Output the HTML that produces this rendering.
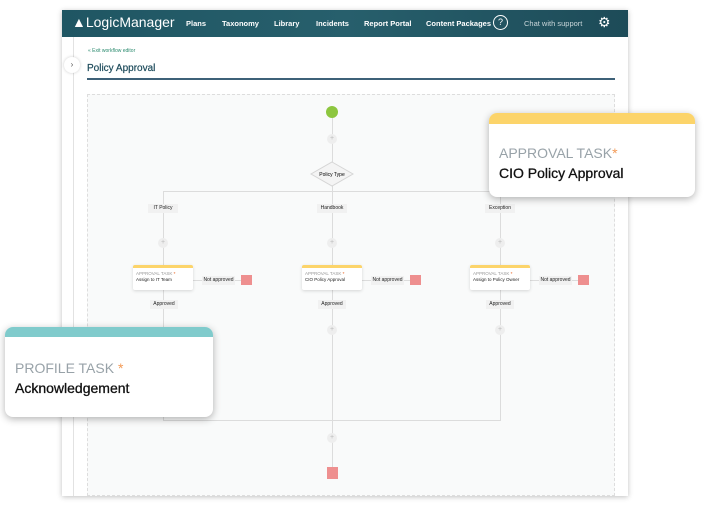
<!DOCTYPE html>
<html><head><meta charset="utf-8"><style>
*{box-sizing:border-box;margin:0;padding:0}
body{width:705px;height:505px;background:#fff;position:relative;overflow:hidden;font-family:"Liberation Sans",sans-serif}
.a{position:absolute}
.win{left:62px;top:10px;width:566px;height:486px;background:#fff;box-shadow:0 1px 5px rgba(0,0,0,.25)}
.hdr{left:62px;top:10px;width:566px;height:27px;background:linear-gradient(90deg,#1f5663,#275f6c 50%,#1d4b58)}
.nav{color:#fff;font-size:7.5px;font-weight:bold;top:19px;white-space:nowrap}
.vl{background:#dcdcdc;width:1px}
.hl{background:#dcdcdc;height:1px}
.plus{width:10px;height:10px;border-radius:50%;background:#eeeeee;color:#bbb;font-size:7px;line-height:10px;text-align:center}
.lbl{background:#f1f1f1;font-size:5px;color:#222;text-align:center;height:9px;line-height:9px;white-space:nowrap}
.card{width:60px;height:25px;background:#fff;border-top:3px solid #fcd46a;border-radius:2px;box-shadow:0 1px 3px rgba(0,0,0,.15);font-size:4.5px;padding:3px 3px 0;white-space:nowrap}
.card .t{color:#999}.card .t b{color:#e85}
.card .n{color:#222;margin-top:1px}
.red{width:11px;height:10px;background:#ee8f8f}
.pop{background:#fff;border-radius:8px;box-shadow:0 2px 8px rgba(0,0,0,.3);overflow:hidden}
.pop .k{color:#98a2a8;font-size:14px}
.pop .k span{color:#f39a56}
.pop .v{color:#111;font-size:14px;margin-top:4px;-webkit-text-stroke:.3px #111}
</style></head><body>
<div class="a win"></div>
<div class="a hdr"></div>
<div class="a" style="left:72px;top:14px;color:#fff;font-size:14px">&#9650;LogicManager</div>
<div class="a nav" style="left:186px">Plans</div>
<div class="a nav" style="left:222px">Taxonomy</div>
<div class="a nav" style="left:274px">Library</div>
<div class="a nav" style="left:316px">Incidents</div>
<div class="a nav" style="left:364px">Report Portal</div>
<div class="a nav" style="left:426px">Content Packages</div>
<div class="a" style="left:493px;top:15px;width:15px;height:15px;border:1.5px solid #fff;border-radius:50%;color:#fff;font-size:9px;text-align:center;line-height:12px">?</div>
<div class="a" style="left:524px;top:19px;color:#c9d6da;font-size:7.5px">Chat with support</div>
<div class="a" style="left:598px;top:14px;color:#fff;font-size:14px">&#9881;</div>
<div class="a" style="left:73px;top:37px;width:1px;height:459px;background:#e2e2e2"></div>
<div class="a" style="left:64px;top:57px;width:16px;height:16px;border-radius:50%;background:#fff;box-shadow:0 0 3px rgba(0,0,0,.2);font-size:8px;text-align:center;line-height:15px;color:#555">&#8250;</div>
<div class="a" style="left:88px;top:48px;font-size:5px;color:#2a8a6e">&laquo; Exit workflow editor</div>
<div class="a" style="left:87px;top:63px;font-size:10px;color:#1d4b5b;-webkit-text-stroke:.2px #1d4b5b">Policy Approval</div>
<div class="a" style="left:87px;top:78px;width:528px;height:2px;background:#3e6178"></div>
<div class="a" style="left:87px;top:94px;width:528px;height:402px;background:#f9fafa;border:1px dashed #ddd"></div>

<div class="a vl" style="left:332px;top:112px;height:360px"></div>
<div class="a vl" style="left:163px;top:191px;height:230px"></div>
<div class="a vl" style="left:500px;top:191px;height:230px"></div>
<div class="a hl" style="left:163px;top:191px;width:337px"></div>
<div class="a hl" style="left:163px;top:420px;width:337px"></div>
<div class="a" style="left:326px;top:106px;width:12px;height:12px;border-radius:50%;background:#8dc63f"></div>
<div class="a plus" style="left:327px;top:134px">+</div>
<svg class="a" style="left:310px;top:161px" width="44" height="26"><polygon points="22,1 43,13 22,25 1,13" fill="#f4f4f4" stroke="#d5d5d5"/><text x="22" y="15" font-size="5" text-anchor="middle" font-family="Liberation Sans">Policy Type</text></svg>
<div class="a lbl" style="left:148px;top:204px;width:30px">IT Policy</div>
<div class="a lbl" style="left:317px;top:204px;width:30px">Handbook</div>
<div class="a lbl" style="left:485px;top:204px;width:30px">Exception</div>
<div class="a plus" style="left:158px;top:238px">+</div>
<div class="a plus" style="left:327px;top:238px">+</div>
<div class="a plus" style="left:495px;top:238px">+</div>

<div class="a hl" style="left:193px;top:280px;width:48px"></div>
<div class="a hl" style="left:362px;top:280px;width:48px"></div>
<div class="a hl" style="left:530px;top:280px;width:48px"></div>
<div class="a card" style="left:133px;top:265px"><div class="t">APPROVAL TASK <b>*</b></div><div class="n">Assign to IT Team</div></div>
<div class="a card" style="left:302px;top:265px"><div class="t">APPROVAL TASK <b>*</b></div><div class="n">CIO Policy Approval</div></div>
<div class="a card" style="left:470px;top:265px"><div class="t">APPROVAL TASK <b>*</b></div><div class="n">Assign to Policy Owner</div></div>
<div class="a lbl" style="left:202px;top:276px;width:33px">Not approved</div>
<div class="a lbl" style="left:371px;top:276px;width:33px">Not approved</div>
<div class="a lbl" style="left:539px;top:276px;width:33px">Not approved</div>
<div class="a red" style="left:241px;top:275px"></div>
<div class="a red" style="left:410px;top:275px"></div>
<div class="a red" style="left:578px;top:275px"></div>
<div class="a lbl" style="left:150px;top:300px;width:28px">Approved</div>
<div class="a lbl" style="left:318px;top:300px;width:28px">Approved</div>
<div class="a lbl" style="left:486px;top:300px;width:28px">Approved</div>
<div class="a plus" style="left:327px;top:325px">+</div>
<div class="a plus" style="left:495px;top:325px">+</div>
<div class="a plus" style="left:327px;top:433px">+</div>
<div class="a red" style="left:327px;top:467px;height:12px"></div>

<div class="a pop" style="left:489px;top:113px;width:206px;height:84px">
<div style="height:11px;background:#fcd46a"></div>
<div style="padding:21px 0 0 10px"><div class="k">APPROVAL TASK<span>*</span></div><div class="v">CIO Policy Approval</div></div></div>
<div class="a pop" style="left:5px;top:327px;width:208px;height:90px">
<div style="height:10px;background:#80cbcc"></div>
<div style="padding:23px 0 0 10px"><div class="k">PROFILE TASK <span>*</span></div><div class="v">Acknowledgement</div></div></div>
</body></html>
